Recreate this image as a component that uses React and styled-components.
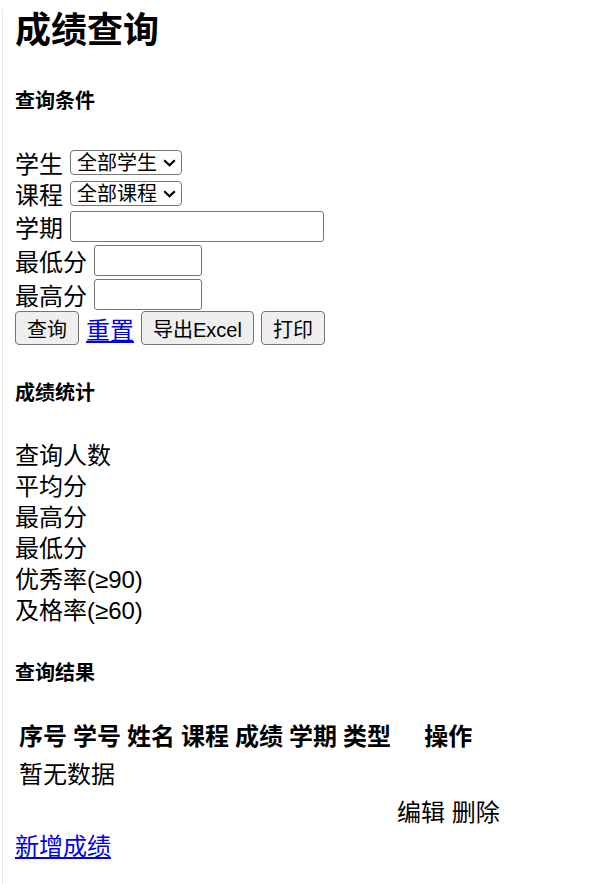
import React from 'react';
import styled, { createGlobalStyle } from 'styled-components';

const GlobalStyle = createGlobalStyle`
  body {
    margin: 0;
    background: #fff;
    color: #000;
    font-family: "Liberation Sans", "Noto Sans CJK SC", sans-serif;
  }
`;

const Page = styled.div`
  margin-left: 2px;
  border-left: 1px solid #e6e6e6;
  padding-left: 12px;
  min-height: 884px;
  box-sizing: border-box;
`;

const Title = styled.h1`
  margin: 9px 0 0;
  font-size: 36px;
  line-height: 44px;
  font-weight: bold;
`;

const SectionTitle = styled.h5`
  margin: ${props => props.$top}px 0 0;
  font-size: 20px;
  line-height: 28px;
  font-weight: bold;
`;

const Form = styled.form`
  margin-top: 32px;
  display: flex;
  flex-direction: column;
`;

const FieldRow = styled.div`
  height: ${props => props.$h}px;
  display: flex;
  align-items: center;
  gap: 7px;
  font-size: 24px;
`;

const SelectWrap = styled.span`
  position: relative;
  display: inline-flex;
`;

const Select = styled.select`
  appearance: none;
  width: 112px;
  height: 25px;
  font-size: 20px;
  line-height: 23px;
  font-family: "Liberation Sans", "Noto Sans CJK SC", sans-serif;
  color: #000;
  background: #fff;
  border: 1px solid #767676;
  border-radius: 4px;
  padding: 1px 18px 0 6px;
  box-sizing: border-box;
  overflow: hidden;
`;

const Chevron = styled.svg`
  position: absolute;
  right: 6px;
  top: 9px;
  width: 13px;
  height: 8px;
  pointer-events: none;
`;

const TextInput = styled.input`
  width: ${props => props.$w}px;
  height: 31px;
  box-sizing: border-box;
  border: 1px solid #767676;
  border-radius: 3px;
  font-size: 20px;
  padding: 0 4px;
  background: #fff;
`;

const Button = styled.button`
  height: 34px;
  padding: 0 11px;
  font-size: 20px;
  font-family: "Liberation Sans", "Noto Sans CJK SC", sans-serif;
  color: #000;
  background: #efefef;
  border: 1px solid #767676;
  border-radius: 4px;
  box-sizing: border-box;
`;

const Link = styled.a`
  color: #0000ee;
  text-decoration: underline;
  font-size: 24px;
  cursor: pointer;
`;

const StatList = styled.div`
  margin-top: 33px;
  font-size: 24px;
  line-height: 31px;
`;

const Table = styled.table`
  margin-top: 30px;
  border-spacing: 2px;
  font-size: 24px;
  line-height: 32px;
`;

const Th = styled.th`
  padding: 2px;
  font-weight: bold;
  text-align: center;
  white-space: nowrap;
`;

const Td = styled.td`
  padding: 2px;
  text-align: left;
  white-space: nowrap;
`;

const AddLink = styled(Link)`
  display: block;
  width: fit-content;
  line-height: 28px;
`;

const columns = ['序号', '学号', '姓名', '课程', '成绩', '学期', '类型', '操作'];
const stats = ['查询人数', '平均分', '最高分', '最低分', '优秀率(≥90)', '及格率(≥60)'];

function Dropdown({ label }) {
  return (
    <SelectWrap>
      <Select defaultValue="">
        <option value="">{label}</option>
      </Select>
      <Chevron viewBox="0 0 13 8">
        <path d="M1.2 1.2 L6.5 6.3 L11.8 1.2" fill="none" stroke="#000" strokeWidth="2.2" />
      </Chevron>
    </SelectWrap>
  );
}

export default function App() {
  return (
    <Page>
      <GlobalStyle />
      <Title>成绩查询</Title>

      <SectionTitle $top={34}>查询条件</SectionTitle>
      <Form onSubmit={e => e.preventDefault()}>
        <FieldRow $h={31}>
          <span>学生</span>
          <Dropdown label="全部学生" />
        </FieldRow>
        <FieldRow $h={31}>
          <span>课程</span>
          <Dropdown label="全部课程" />
        </FieldRow>
        <FieldRow $h={34}>
          <span>学期</span>
          <TextInput type="text" $w={254} />
        </FieldRow>
        <FieldRow $h={34}>
          <span>最低分</span>
          <TextInput type="text" $w={108} />
        </FieldRow>
        <FieldRow $h={34}>
          <span>最高分</span>
          <TextInput type="text" $w={108} />
        </FieldRow>
        <FieldRow $h={34}>
          <Button type="submit">查询</Button>
          <Link>重置</Link>
          <Button type="button">导出Excel</Button>
          <Button type="button">打印</Button>
        </FieldRow>
      </Form>

      <SectionTitle $top={34}>成绩统计</SectionTitle>
      <StatList>
        {stats.map(s => (
          <div key={s}>{s}</div>
        ))}
      </StatList>

      <SectionTitle $top={33}>查询结果</SectionTitle>
      <Table>
        <thead>
          <tr>
            {columns.map(c => (
              <Th key={c}>{c}</Th>
            ))}
          </tr>
        </thead>
        <tbody>
          <tr>
            <Td colSpan={8}>暂无数据</Td>
          </tr>
          <tr>
            {columns.slice(0, 7).map(c => (
              <Td key={c}></Td>
            ))}
            <Td>编辑 删除</Td>
          </tr>
        </tbody>
      </Table>
      <AddLink>新增成绩</AddLink>
    </Page>
  );
}
